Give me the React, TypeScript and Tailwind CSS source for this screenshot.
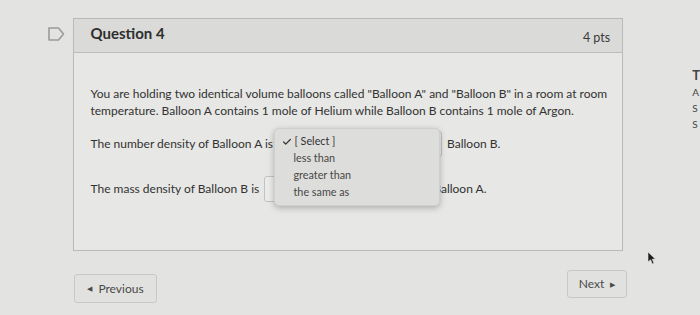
import { Check } from 'lucide-react';

function BookmarkIcon() {
  return (
    <svg width="17" height="14" viewBox="0 0 17 14" fill="none">
      <path d="M1 1H10.5L15.5 7L10.5 13H1Z" stroke="#9a9a98" strokeWidth="1.6" strokeLinejoin="round" />
    </svg>
  );
}

function Cursor() {
  return (
    <svg width="9" height="14" viewBox="0 0 9 14">
      <path d="M1 1L1 11L3.5 8.8L5.4 13L7 12.3L5.2 8.2L8.3 8Z" fill="#1e1e1e" stroke="#e5e5e5" strokeWidth="0.6" />
    </svg>
  );
}

const options = ['less than', 'greater than', 'the same as'];

export default function App() {
  return (
    <div className="relative w-[700px] h-[315px] overflow-hidden bg-[#e3e3e1] font-['Lato','Liberation_Sans',sans-serif] text-[#323232]">
      <div className="flex pt-[18px]">
        <div className="w-[74px] flex justify-end pr-[8px] pt-[9px]">
          <BookmarkIcon />
        </div>

        {/* question card */}
        <div className="w-[554px] border border-[#b9b9b7] bg-[#e7e7e5]">
          <div className="h-[34px] flex items-center justify-between pl-[16px] pr-[12px] bg-[#dadad8] border-b border-[#bdbdbb]">
            <span className="text-[15px] font-bold text-[#2e2e2e] mb-[4px]">Question 4</span>
            <span className="text-[12.5px] text-[#3a3a3a] mt-[6px]">4 pts</span>
          </div>

          <div className="h-[197px] pl-[16px] pr-[10px] pt-[32px] text-[12px]">
            <p className="leading-[17px]">
              You are holding two identical volume balloons called "Balloon A" and "Balloon B" in a room at room
              temperature. Balloon A contains 1 mole of Helium while Balloon B contains 1 mole of Argon.
            </p>

            <div className="relative mt-[11px]">
              <div className="flex items-center gap-[5px] h-[27px]">
                <span>The number density of Balloon A is</span>
                <div className="w-[164px] h-[26px] rounded-[3px] border border-[#c2c2c0] bg-[#ebebe9]" />
                <span>Balloon B.</span>
              </div>
              <div className="flex items-center gap-[5px] h-[27px] mt-[18px]">
                <span>The mass density of Balloon B is</span>
                <div className="w-[164px] h-[26px] rounded-[3px] border border-[#c2c2c0] bg-[#ebebe9]" />
                <span>Balloon A.</span>
              </div>

              {/* open dropdown menu */}
              <div className="absolute left-[184px] top-[-2px] w-[166px] h-[78px] rounded-[5px] bg-[#dddddb] shadow-[0_2px_6px_rgba(0,0,0,0.25)] border border-[#cfcfcd] pt-[4px] text-[10.8px] text-[#484848]">
                <div className="flex items-center h-[17px] pl-[7px]">
                  <Check className="w-[10px] h-[10px] text-[#333]" strokeWidth={3} />
                  <span className="ml-[2px] text-[#333]">[ Select ]</span>
                </div>
                {options.map((o) => (
                  <div key={o} className="h-[17px] flex items-center pl-[18px]">
                    {o}
                  </div>
                ))}
              </div>
            </div>
          </div>
        </div>

        {/* sidebar edge */}
        <div className="ml-[69px] pt-[48px] flex flex-col text-[10px] leading-[16px] text-[#444]">
          <span className="font-bold text-[13px] leading-[18px]">T</span>
          <span>A</span>
          <span>S</span>
          <span>S</span>
        </div>
      </div>

      <div className="flex items-start justify-between w-[553px] ml-[74px] mt-[19px]">
        <button className="mt-[4px] h-[29px] w-[83px] flex items-center justify-center gap-[6px] rounded-[3px] border border-[#c8c8c6] bg-[#e1e1df] text-[12px] text-[#4a4a4a]">
          <span className="text-[7px]">◀</span>
          Previous
        </button>
        <button className="h-[28px] w-[60px] flex items-center justify-center gap-[6px] rounded-[3px] border border-[#c8c8c6] bg-[#e1e1df] text-[12px] text-[#4a4a4a]">
          Next
          <span className="text-[7px]">▶</span>
        </button>
      </div>

      <div className="absolute left-[647px] top-[251px]">
        <Cursor />
      </div>
    </div>
  );
}
